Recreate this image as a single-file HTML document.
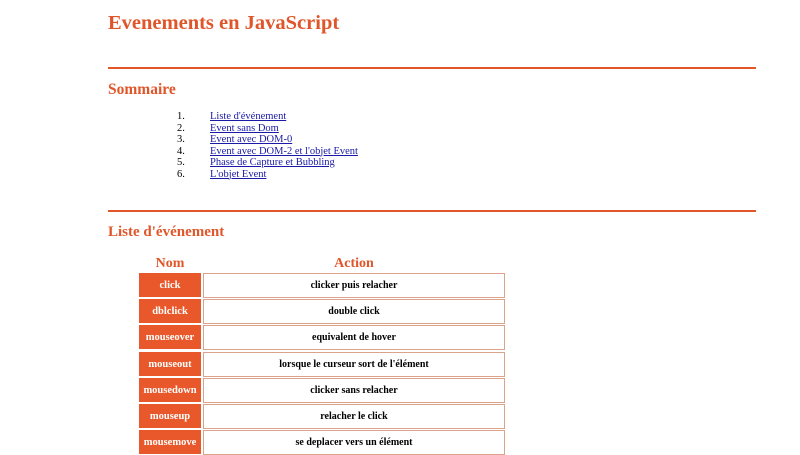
<!DOCTYPE html>
<html><head><meta charset="utf-8"><style>
body{margin:0;width:800px;height:450px;overflow:hidden;background:#fff;font-family:"Liberation Serif",serif;position:relative}
.a{position:absolute;white-space:nowrap}
h1,h2{margin:0;color:#e0562a;font-weight:bold}
.hr{position:absolute;left:108px;width:648px;height:2px;background:#e0562a}
.li{position:absolute;font-size:10.5px;line-height:11.5px;white-space:nowrap;width:400px}
.li span{position:absolute;left:0}
.li a{position:absolute;left:33px;color:#1a1aa6;text-decoration:underline}
.th{position:absolute;top:256px;font-size:14px;color:#e0562a;font-weight:bold;text-align:center}
.n{position:absolute;left:139px;width:62px;height:24px;background:#e8582a;color:#fff;font-size:10.5px;font-weight:bold;text-align:center;line-height:25px}
.c{position:absolute;left:203px;width:300px;height:23px;border:1px solid #dba28c;font-size:10px;font-weight:bold;text-align:center;line-height:23px}
</style></head><body>
<h1 class="a" style="left:108px;top:12px;font-size:20.5px">Evenements en JavaScript</h1>
<div class="hr" style="top:67px"></div>
<h2 class="a" style="left:108px;top:81px;font-size:15.5px">Sommaire</h2>
<div class="li" style="left:177px;top:111px">
<div style="position:relative;height:11.5px"><span>1.</span><a>Liste d'événement</a></div>
<div style="position:relative;height:11.5px"><span>2.</span><a>Event sans Dom</a></div>
<div style="position:relative;height:11.5px"><span>3.</span><a>Event avec DOM-0</a></div>
<div style="position:relative;height:11.5px"><span>4.</span><a>Event avec DOM-2 et l'objet Event</a></div>
<div style="position:relative;height:11.5px"><span>5.</span><a>Phase de Capture et Bubbling</a></div>
<div style="position:relative;height:11.5px"><span>6.</span><a>L'objet Event</a></div>
</div>
<div class="hr" style="top:210px"></div>
<h2 class="a" style="left:108px;top:224px;font-size:15px">Liste d'événement</h2>
<div class="th" style="left:139px;width:62px">Nom</div>
<div class="th" style="left:203px;width:302px">Action</div>
<div class="n" style="top:273px">click</div><div class="c" style="top:273px">clicker puis relacher</div>
<div class="n" style="top:299px">dblclick</div><div class="c" style="top:299px">double click</div>
<div class="n" style="top:325px">mouseover</div><div class="c" style="top:325px">equivalent de hover</div>
<div class="n" style="top:352px">mouseout</div><div class="c" style="top:352px">lorsque le curseur sort de l'élément</div>
<div class="n" style="top:378px">mousedown</div><div class="c" style="top:378px">clicker sans relacher</div>
<div class="n" style="top:404px">mouseup</div><div class="c" style="top:404px">relacher le click</div>
<div class="n" style="top:430px">mousemove</div><div class="c" style="top:430px">se deplacer vers un élément</div>
</body></html>
